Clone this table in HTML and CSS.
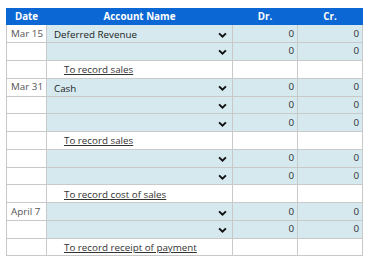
FILE: index.html
```html
<!DOCTYPE html>
<html lang="en">
<head>
  <meta charset="UTF-8" />
  <title>Journal Entries</title>
  <link rel="stylesheet" href="styles.css">
</head>
<body>
  <div class="sheet">
    <table class="journal">
      <colgroup>
        <col class="col-date">
        <col class="col-account">
        <col class="col-amount">
        <col class="col-amount">
      </colgroup>
      <thead>
        <tr>
          <th>Date</th>
          <th>Account Name</th>
          <th>Dr.</th>
          <th>Cr.</th>
        </tr>
      </thead>
      <tbody>
        <tr>
          <td class="date">Mar 15</td>
          <td class="account"><div class="pick"><span>Deferred Revenue</span><svg class="chev" viewBox="0 0 10 6"><path d="M1.2 1.2 L5 4.8 L8.8 1.2"/></svg></div></td>
          <td class="amount">0</td>
          <td class="amount">0</td>
        </tr>
        <tr>
          <td class="date"></td>
          <td class="account"><div class="pick"><span></span><svg class="chev" viewBox="0 0 10 6"><path d="M1.2 1.2 L5 4.8 L8.8 1.2"/></svg></div></td>
          <td class="amount">0</td>
          <td class="amount">0</td>
        </tr>
        <tr>
          <td class="date"></td>
          <td class="note"><u>To record sales</u></td>
          <td></td>
          <td></td>
        </tr>
        <tr>
          <td class="date">Mar 31</td>
          <td class="account"><div class="pick"><span>Cash</span><svg class="chev" viewBox="0 0 10 6"><path d="M1.2 1.2 L5 4.8 L8.8 1.2"/></svg></div></td>
          <td class="amount">0</td>
          <td class="amount">0</td>
        </tr>
        <tr>
          <td class="date"></td>
          <td class="account"><div class="pick"><span></span><svg class="chev" viewBox="0 0 10 6"><path d="M1.2 1.2 L5 4.8 L8.8 1.2"/></svg></div></td>
          <td class="amount">0</td>
          <td class="amount">0</td>
        </tr>
        <tr>
          <td class="date"></td>
          <td class="account"><div class="pick"><span></span><svg class="chev" viewBox="0 0 10 6"><path d="M1.2 1.2 L5 4.8 L8.8 1.2"/></svg></div></td>
          <td class="amount">0</td>
          <td class="amount">0</td>
        </tr>
        <tr>
          <td class="date"></td>
          <td class="note"><u>To record sales</u></td>
          <td></td>
          <td></td>
        </tr>
        <tr>
          <td class="date"></td>
          <td class="account"><div class="pick"><span></span><svg class="chev" viewBox="0 0 10 6"><path d="M1.2 1.2 L5 4.8 L8.8 1.2"/></svg></div></td>
          <td class="amount">0</td>
          <td class="amount">0</td>
        </tr>
        <tr>
          <td class="date"></td>
          <td class="account"><div class="pick"><span></span><svg class="chev" viewBox="0 0 10 6"><path d="M1.2 1.2 L5 4.8 L8.8 1.2"/></svg></div></td>
          <td class="amount">0</td>
          <td class="amount">0</td>
        </tr>
        <tr>
          <td class="date"></td>
          <td class="note"><u>To record cost of sales</u></td>
          <td></td>
          <td></td>
        </tr>
        <tr>
          <td class="date">April 7</td>
          <td class="account"><div class="pick"><span></span><svg class="chev" viewBox="0 0 10 6"><path d="M1.2 1.2 L5 4.8 L8.8 1.2"/></svg></div></td>
          <td class="amount">0</td>
          <td class="amount">0</td>
        </tr>
        <tr>
          <td class="date"></td>
          <td class="account"><div class="pick"><span></span><svg class="chev" viewBox="0 0 10 6"><path d="M1.2 1.2 L5 4.8 L8.8 1.2"/></svg></div></td>
          <td class="amount">0</td>
          <td class="amount">0</td>
        </tr>
        <tr>
          <td class="date"></td>
          <td class="note"><u>To record receipt of payment</u></td>
          <td></td>
          <td></td>
        </tr>
      </tbody>
    </table>
  </div>
</body>
</html>
```

FILE: styles.css
```css
body {
  margin: 0;
  background: #fff;
  font-family: "Open Sans", Arial, sans-serif;
  font-size: 9.8px;
  color: #222;
}
.sheet {
  padding: 8px 0 0 6px;
}
.journal {
  border-collapse: collapse;
  table-layout: fixed;
  width: 356px;
}
.col-date {
  width: 40px;
}
.col-account {
  width: 186px;
}
.col-amount {
  width: 65px;
}
.journal th {
  height: 15px;
  padding: 0;
  background: #0b67d3;
  border: 1px solid #0b67d3;
  color: #fff;
  font-weight: bold;
  text-align: center;
  line-height: 13px;
}
.journal tbody tr {
  height: 17.77px;
}
.journal td {
  padding: 0;
  border: 1px solid #c9c9c9;
  line-height: 14px;
  vertical-align: middle;
  white-space: nowrap;
}
.date {
  padding-left: 4px !important;
  color: #555;
}
.account {
  background: #d5e9ef;
}
.pick {
  display: flex;
  align-items: center;
  justify-content: space-between;
  padding: 3px 5px 0 7px;
}
.chev {
  width: 9px;
  height: 6px;
  margin-top: -1px;
  fill: none;
  stroke: #111;
  stroke-width: 2.2;
}
.amount {
  background: #d5e9ef;
  text-align: right;
  padding-right: 3px !important;
  color: #333;
}
.note {
  padding-left: 17px !important;
  padding-top: 2px !important;
  color: #333;
}
.note u {
  text-decoration-color: #333;
}
```
